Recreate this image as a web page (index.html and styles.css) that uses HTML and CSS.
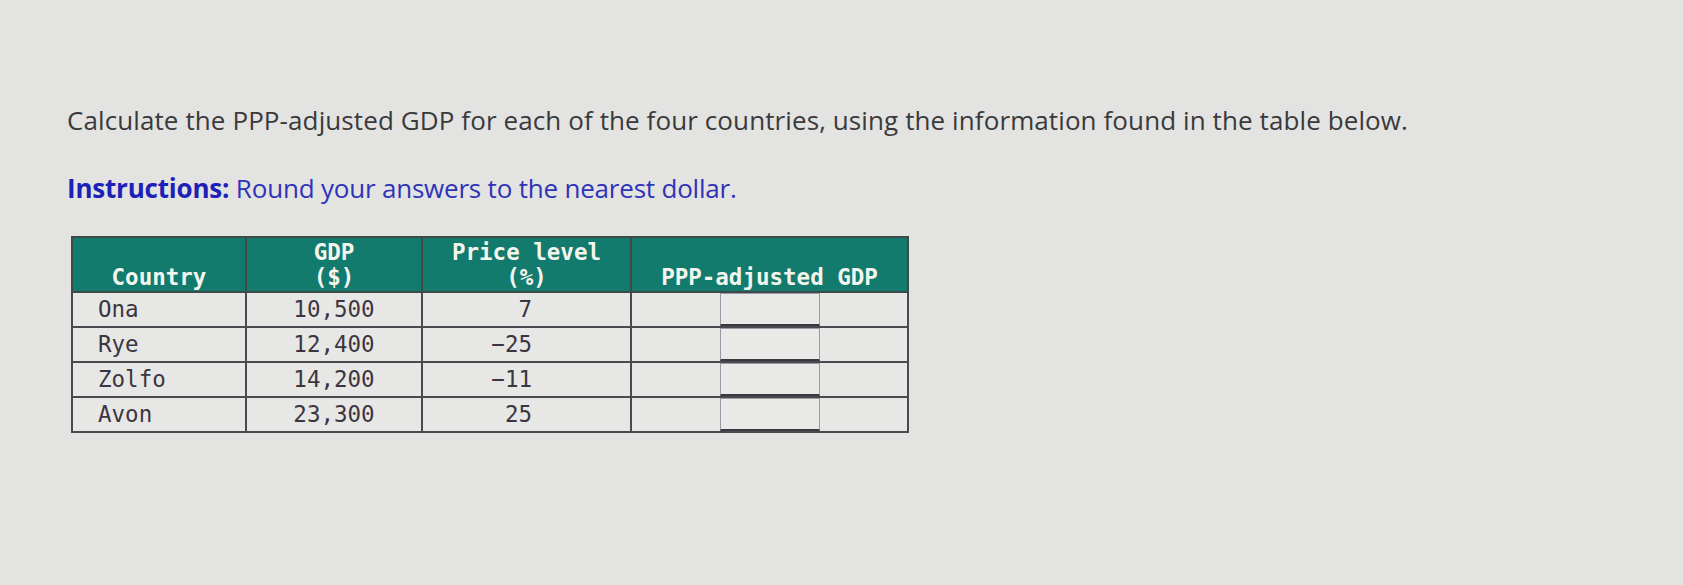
FILE: index.html
```html
<!DOCTYPE html>
<html>
<head>
<meta charset="utf-8">
<link rel="stylesheet" href="styles.css">
</head>
<body>
<div class="page">
  <p class="question">Calculate the PPP-adjusted GDP for each of the four countries, using the information found in the table below.</p>
  <p class="instructions"><b>Instructions:</b> Round your answers to the nearest dollar.</p>
  <table class="data">
    <thead>
      <tr>
        <th class="c1">Country</th>
        <th class="c2">GDP<br>($)</th>
        <th class="c3">Price level<br>(%)</th>
        <th class="c4">PPP-adjusted GDP</th>
      </tr>
    </thead>
    <tbody>
      <tr><td class="name">Ona</td><td class="mid">10,500</td><td class="num">7</td><td class="ans"><input class="box" type="text"></td></tr>
      <tr><td class="name">Rye</td><td class="mid">12,400</td><td class="num">−25</td><td class="ans"><input class="box" type="text"></td></tr>
      <tr><td class="name">Zolfo</td><td class="mid">14,200</td><td class="num">−11</td><td class="ans"><input class="box" type="text"></td></tr>
      <tr><td class="name">Avon</td><td class="mid">23,300</td><td class="num">25</td><td class="ans"><input class="box" type="text"></td></tr>
    </tbody>
  </table>
</div>
</body>
</html>
```

FILE: styles.css
```css
html, body {
  margin: 0;
  padding: 0;
  background: #e3e3e1;
}
.page {
  padding: 100px 0 0 67px;
  font-family: "Open Sans", "Liberation Sans", sans-serif;
}
.question {
  margin: 0;
  font-size: 26px;
  line-height: 40px;
  color: #3a3a3c;
  letter-spacing: 0.1px;
}
.instructions {
  margin: 28px 0 0 0;
  font-size: 26px;
  line-height: 40px;
  color: #2f33b8;
  letter-spacing: -0.2px;
}
.instructions b {
  color: #1c22b8;
  font-weight: 700;
}
.data {
  margin: 28px 0 0 4px;
  border-collapse: collapse;
  border: 2px solid #4a4a4a;
  font-family: "DejaVu Sans Mono", "Liberation Mono", monospace;
  font-size: 22.5px;
  color: #3b3540;
}
.data th {
  background: #137b6d;
  color: #f4f6ee;
  font-weight: bold;
  vertical-align: bottom;
  text-align: center;
  line-height: 25px;
  padding: 0 0 1px 0;
  height: 52px;
  border: 2px solid #3e4a48;
}
.c1 { width: 172px; }
.c2 { width: 174px; }
.c3 { width: 207px; }
.c4 { width: 275px; }
.data td {
  background: #e7e7e5;
  height: 33px;
  padding: 0;
  border: 2px solid #4a4a4e;
  line-height: 33px;
}
.name { text-align: left; padding-left: 25px !important; }
.mid { text-align: center; }
.num { text-align: right; padding-right: 98px !important; }
.ans { text-align: center; }
.box {
  display: block;
  margin: 0 auto;
  width: 100px;
  height: 33px;
  box-sizing: border-box;
  border: 1px solid #9a9aa6;
  border-bottom: 2px solid #3c3842;
  background: #e9e9e7;
  padding: 0;
}
```
